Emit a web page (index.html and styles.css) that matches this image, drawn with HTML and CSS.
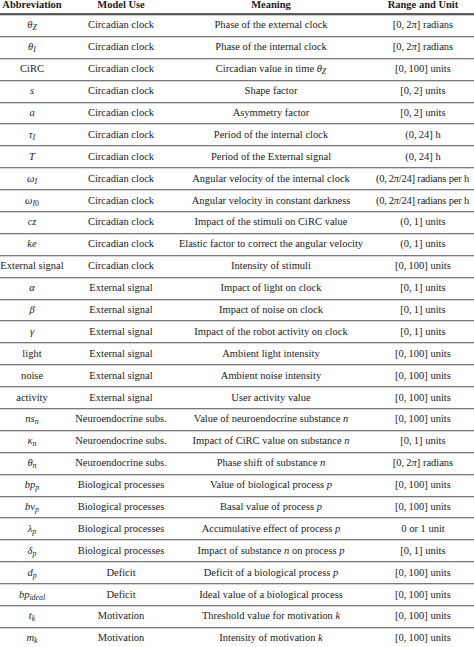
FILE: index.html
```html
<!DOCTYPE html>
<html>
<head>
<meta charset="utf-8">
<link rel="stylesheet" href="styles.css">
</head>
<body>
<div class="table">
  <div class="row head">
    <div class="c1">Abbreviation</div><div class="c2">Model Use</div><div class="c3">Meaning</div><div class="c4">Range and Unit</div>
  </div>
  <div class="row"><div class="c1"><i>θ</i><sub><i>Z</i></sub></div><div class="c2">Circadian clock</div><div class="c3">Phase of the external clock</div><div class="c4">[0,&thinsp;2<i>π</i>] radians</div></div>
  <div class="row"><div class="c1"><i>θ</i><sub><i>I</i></sub></div><div class="c2">Circadian clock</div><div class="c3">Phase of the internal clock</div><div class="c4">[0,&thinsp;2<i>π</i>] radians</div></div>
  <div class="row"><div class="c1">CiRC</div><div class="c2">Circadian clock</div><div class="c3">Circadian value in time <i>θ</i><sub><i>Z</i></sub></div><div class="c4">[0,&thinsp;100] units</div></div>
  <div class="row"><div class="c1"><i>s</i></div><div class="c2">Circadian clock</div><div class="c3">Shape factor</div><div class="c4">[0,&thinsp;2] units</div></div>
  <div class="row"><div class="c1"><i>a</i></div><div class="c2">Circadian clock</div><div class="c3">Asymmetry factor</div><div class="c4">[0,&thinsp;2] units</div></div>
  <div class="row"><div class="c1"><i>τ</i><sub><i>I</i></sub></div><div class="c2">Circadian clock</div><div class="c3">Period of the internal clock</div><div class="c4">(0,&thinsp;24] h</div></div>
  <div class="row"><div class="c1"><i>T</i></div><div class="c2">Circadian clock</div><div class="c3">Period of the External signal</div><div class="c4">(0,&thinsp;24] h</div></div>
  <div class="row"><div class="c1"><i>ω</i><sub><i>I</i></sub></div><div class="c2">Circadian clock</div><div class="c3">Angular velocity of the internal clock</div><div class="c4 wide">(0,&thinsp;2<i>π</i>/24] radians per h</div></div>
  <div class="row"><div class="c1"><i>ω</i><sub><i>I</i>0</sub></div><div class="c2">Circadian clock</div><div class="c3">Angular velocity in constant darkness</div><div class="c4 wide">(0,&thinsp;2<i>π</i>/24] radians per h</div></div>
  <div class="row"><div class="c1"><i>cz</i></div><div class="c2">Circadian clock</div><div class="c3">Impact of the stimuli on CiRC value</div><div class="c4">(0,&thinsp;1] units</div></div>
  <div class="row"><div class="c1"><i>ke</i></div><div class="c2">Circadian clock</div><div class="c3">Elastic factor to correct the angular velocity</div><div class="c4">(0,&thinsp;1] units</div></div>
  <div class="row"><div class="c1">External signal</div><div class="c2">Circadian clock</div><div class="c3">Intensity of stimuli</div><div class="c4">[0,&thinsp;100] units</div></div>
  <div class="row"><div class="c1"><i>α</i></div><div class="c2">External signal</div><div class="c3">Impact of light on clock</div><div class="c4">[0,&thinsp;1] units</div></div>
  <div class="row"><div class="c1"><i>β</i></div><div class="c2">External signal</div><div class="c3">Impact of noise on clock</div><div class="c4">[0,&thinsp;1] units</div></div>
  <div class="row"><div class="c1"><i>γ</i></div><div class="c2">External signal</div><div class="c3">Impact of the robot activity on clock</div><div class="c4">[0,&thinsp;1] units</div></div>
  <div class="row"><div class="c1">light</div><div class="c2">External signal</div><div class="c3">Ambient light intensity</div><div class="c4">[0,&thinsp;100] units</div></div>
  <div class="row"><div class="c1">noise</div><div class="c2">External signal</div><div class="c3">Ambient noise intensity</div><div class="c4">[0,&thinsp;100] units</div></div>
  <div class="row"><div class="c1">activity</div><div class="c2">External signal</div><div class="c3">User activity value</div><div class="c4">[0,&thinsp;100] units</div></div>
  <div class="row"><div class="c1"><i>ns</i><sub><i>n</i></sub></div><div class="c2">Neuroendocrine subs.</div><div class="c3">Value of neuroendocrine substance <i>n</i></div><div class="c4">[0,&thinsp;100] units</div></div>
  <div class="row"><div class="c1"><i>κ</i><sub><i>n</i></sub></div><div class="c2">Neuroendocrine subs.</div><div class="c3">Impact of CiRC value on substance <i>n</i></div><div class="c4">[0,&thinsp;1] units</div></div>
  <div class="row"><div class="c1"><i>θ</i><sub><i>n</i></sub></div><div class="c2">Neuroendocrine subs.</div><div class="c3">Phase shift of substance <i>n</i></div><div class="c4">[0,&thinsp;2<i>π</i>] radians</div></div>
  <div class="row"><div class="c1"><i>bp</i><sub><i>p</i></sub></div><div class="c2">Biological processes</div><div class="c3">Value of biological process <i>p</i></div><div class="c4">[0,&thinsp;100] units</div></div>
  <div class="row"><div class="c1"><i>bv</i><sub><i>p</i></sub></div><div class="c2">Biological processes</div><div class="c3">Basal value of process <i>p</i></div><div class="c4">[0,&thinsp;100] units</div></div>
  <div class="row"><div class="c1"><i>λ</i><sub><i>p</i></sub></div><div class="c2">Biological processes</div><div class="c3">Accumulative effect of process <i>p</i></div><div class="c4">0 or 1 unit</div></div>
  <div class="row"><div class="c1"><i>δ</i><sub><i>p</i></sub></div><div class="c2">Biological processes</div><div class="c3">Impact of substance <i>n</i> on process <i>p</i></div><div class="c4">[0,&thinsp;1] units</div></div>
  <div class="row"><div class="c1"><i>d</i><sub><i>p</i></sub></div><div class="c2">Deficit</div><div class="c3">Deficit of a biological process <i>p</i></div><div class="c4">[0,&thinsp;100] units</div></div>
  <div class="row"><div class="c1"><i>bp</i><sub><i>ideal</i></sub></div><div class="c2">Deficit</div><div class="c3">Ideal value of a biological process</div><div class="c4">[0,&thinsp;100] units</div></div>
  <div class="row"><div class="c1"><i>t</i><sub><i>k</i></sub></div><div class="c2">Motivation</div><div class="c3">Threshold value for motivation <i>k</i></div><div class="c4">[0,&thinsp;100] units</div></div>
  <div class="row"><div class="c1"><i>m</i><sub><i>k</i></sub></div><div class="c2">Motivation</div><div class="c3">Intensity of motivation <i>k</i></div><div class="c4">[0,&thinsp;100] units</div></div>
</div>
</body>
</html>
```
FILE: styles.css
```css
html, body {
  margin: 0;
  padding: 0;
  background: #fff;
  overflow: hidden;
}
body {
  width: 474px;
  height: 647px;
}
.table {
  margin-left: -6px;
  width: 480px;
  font-family: "Liberation Serif", "Times New Roman", serif;
  font-size: 10.5px;
  color: #222;
}
.row {
  display: grid;
  grid-template-columns: 76px 102px 198px 104px;
  height: 20.9px;
  align-items: center;
  border-bottom: 1px solid #7a7a7a;
  box-shadow: 0 1px 0 #d4d4d4;
  white-space: nowrap;
}
.row > div {
  text-align: center;
  line-height: 12px;
}
.c4 {
  padding-left: 2px;
}
.head {
  height: 17px;
  margin-top: -4px;
  font-weight: bold;
  border-bottom: 2px solid #5a5a5a;
  box-shadow: 0 1px 0 #c8c8c8;
}
.c4.wide {
  text-align: left;
  padding-left: 6px;
  letter-spacing: -0.2px;
}
sub {
  font-size: 0.75em;
  vertical-align: -0.3em;
  line-height: 0;
}
i {
  font-style: italic;
}
```
